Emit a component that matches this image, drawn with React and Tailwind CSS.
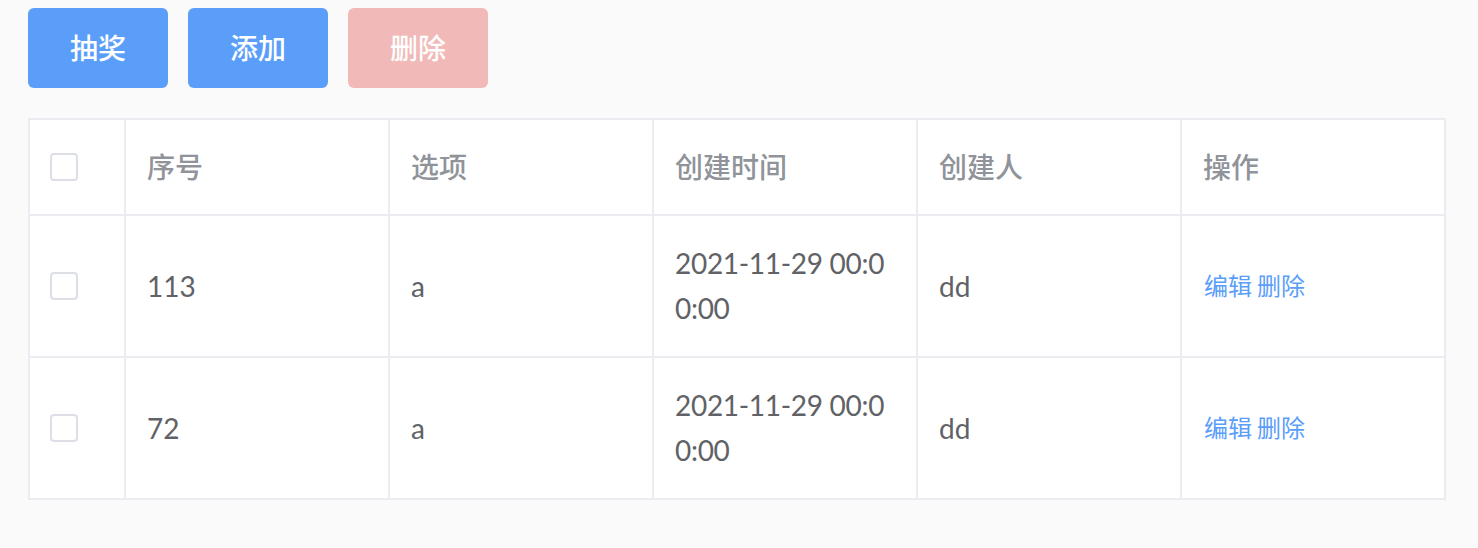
import React from "react";

function Checkbox() {
  return <div className="w-[28px] h-[28px] rounded-[4px] border-2 border-[#dcdfe6] bg-white" />;
}

const rows = [
  { id: "113", opt: "a", time: ["2021-11-29 00:0", "0:00"], user: "dd" },
  { id: "72", opt: "a", time: ["2021-11-29 00:0", "0:00"], user: "dd" },
];

export default function App() {
  const cell = "bg-white flex items-center pl-[21px] text-[28px] text-[#606266]";
  const head = "bg-white flex items-center pl-[21px] text-[28px] font-medium text-[#909399]";
  const btn = "w-[140px] h-[80px] rounded-[6px] text-white text-[28px] font-medium flex items-center justify-center";
  return (
    <div
      className="min-h-[548px] w-full bg-[#fafafa] pt-[8px] pl-[28px]"
      style={{ fontFamily: '"Lato", "Noto Sans CJK SC", sans-serif' }}
    >
      <div className="flex gap-[20px]">
        <button className={btn + " bg-[#5a9ef9]"}>抽奖</button>
        <button className={btn + " bg-[#5a9ef9]"}>添加</button>
        <button className={btn + " bg-[#f1b9b8]"}>删除</button>
      </div>
      <div className="mt-[30px] w-[1418px] grid grid-cols-[94px_repeat(5,262px)] grid-rows-[94px_140px_140px] gap-[2px] p-[2px] bg-[#ebebf2]">
        <div className="bg-white flex items-center pl-[20px]"><Checkbox /></div>
        <div className={head}>序号</div>
        <div className={head}>选项</div>
        <div className={head}>创建时间</div>
        <div className={head}>创建人</div>
        <div className={head}>操作</div>
        {rows.map((r) => (
          <React.Fragment key={r.id}>
            <div className="bg-white flex items-center pl-[20px]"><Checkbox /></div>
            <div className={cell}>{r.id}</div>
            <div className={cell}>{r.opt}</div>
            <div className={cell}>
              <div className="leading-[45px] tracking-[-0.3px]">
                {r.time[0]}
                <br />
                {r.time[1]}
              </div>
            </div>
            <div className={cell}>{r.user}</div>
            <div className="bg-white flex items-center pl-[22px] text-[24px] text-[#5a9ef9]">
              <span>编辑</span>
              <span className="ml-[5px]">删除</span>
            </div>
          </React.Fragment>
        ))}
      </div>
    </div>
  );
}
